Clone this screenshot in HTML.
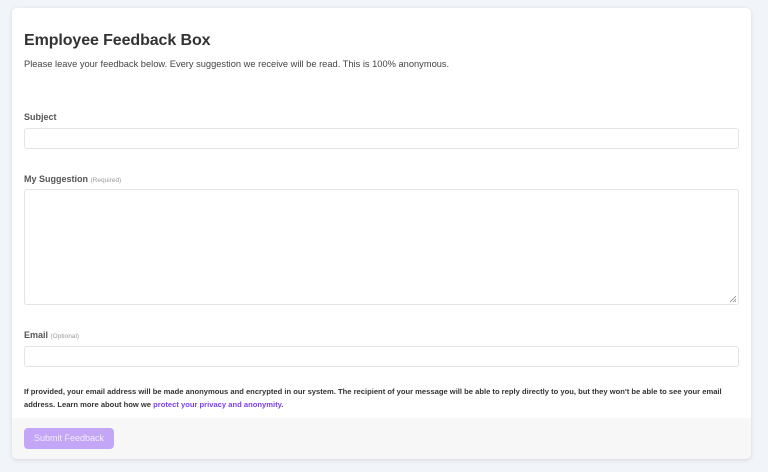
<!DOCTYPE html>
<html><head><style>
*{box-sizing:border-box;margin:0;padding:0}
body{width:768px;height:472px;background:#f1f4f9;font-family:"Liberation Sans",sans-serif;position:relative;overflow:hidden}
.card{position:absolute;left:12px;top:8px;width:739px;height:451px;background:#fff;border-radius:5px;box-shadow:0 1px 4px rgba(0,0,0,.12);overflow:hidden}
.foot{position:absolute;left:0;right:0;top:410px;bottom:0;background:#f7f7f7}
.abs{position:absolute}
h1{position:absolute;left:12px;top:24px;font-size:16px;font-weight:bold;color:#333;letter-spacing:-0.1px}
.sub{left:12px;top:51px;font-size:9.3px;color:#444}
.lbl{left:12px;font-size:9px;font-weight:bold;color:#555}
.lbl span{font-size:6.5px;font-weight:normal;color:#999}
.inp{left:12px;width:715px;border:1px solid #e4e4e4;border-radius:3px;background:#fff}
.note{left:12px;top:377px;width:706px;font-size:7.6px;font-weight:bold;color:#333;line-height:13px}
.note a{color:#7b3ff2;text-decoration:none}
.btn{left:12px;top:420px;width:90px;height:21px;background:#c4a6f7;color:#f3ecff;border-radius:4px;font-size:9px;text-align:center;line-height:21px}
</style></head><body>
<div class="card">
<div class="foot"></div>
<h1>Employee Feedback Box</h1>
<div class="abs sub">Please leave your feedback below. Every suggestion we receive will be read. This is 100% anonymous.</div>
<div class="abs lbl" style="top:104px">Subject</div>
<div class="abs inp" style="top:120px;height:21px"></div>
<div class="abs lbl" style="top:166px">My Suggestion <span>(Required)</span></div>
<div class="abs inp" style="top:181px;height:116px"><svg style="position:absolute;right:1px;bottom:1px" width="8" height="8"><path d="M7 1L1 7M7 4L4 7M7 6L6 7" stroke="#888" stroke-width=".8"/></svg></div>
<div class="abs lbl" style="top:322px">Email <span>(Optional)</span></div>
<div class="abs inp" style="top:338px;height:21px"></div>
<div class="abs note">If provided, your email address will be made anonymous and encrypted in our system. The recipient of your message will be able to reply directly to you, but they won't be able to see your email address. Learn more about how we <a>protect your privacy and anonymity</a>.</div>
<div class="abs btn">Submit Feedback</div>
</div>
</body></html>
